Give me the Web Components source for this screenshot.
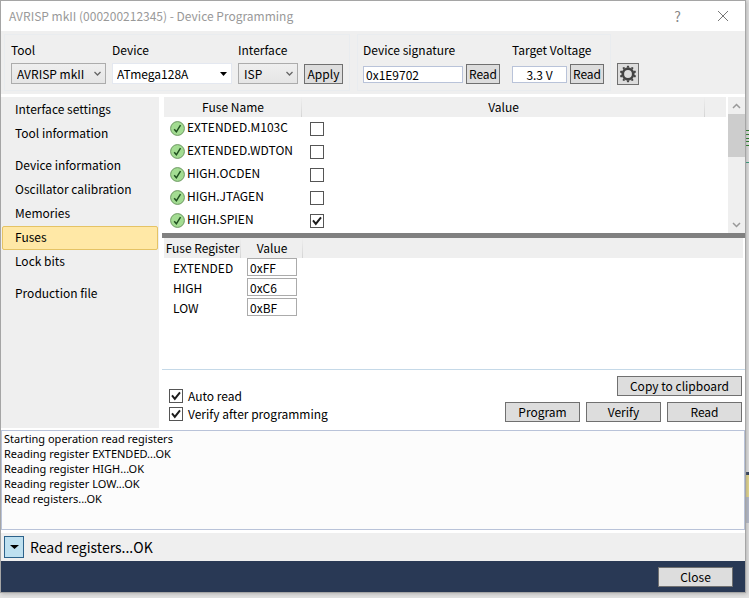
<!DOCTYPE html>
<html lang="en">
<head>
<meta charset="utf-8">
<title>Device Programming</title>
<style>
html{height:100%}
body{margin:0;min-height:100%;display:flex;color:#000;
  /* strip of the editor window that lies behind the dialog */
  background:linear-gradient(#0000 130px,#1c7a1c 130px 131px,#0000 131px 134px,#1c7a1c 134px 135px,#0000 135px 138px,#1c7a1c 138px 139px,
    #0000 139px 141px,#1c7a1c 141px 142px,#0000 142px 145px,#1c7a1c 145px 146px,#0000 146px 162px,#2a9a78 162px 163px,#0000 163px 472px,
    #293955 472px 475px,#e6d888 475px 497px,#b4bacb 497px 523px,#0000 523px) right top/4px 100% no-repeat #e2e2e2;
  font:12px/16px "Noto Sans CJK KR","Malgun Gothic",sans-serif;
  --face:#efefef;--edge:#707070;--pale:#b9c3d9}
</style>
</head>
<body>
<dp-window>
  <dp-titlebar slot="title">AVRISP mkII (000200212345) - Device Programming</dp-titlebar>
  <dp-toolbar slot="toolbar">
    <dp-group>
      <dp-select label="Tool" value="AVRISP mkII" style="--w:95px"></dp-select>
      <dp-select label="Device" value="ATmega128A" kind="combo" style="--w:120px"></dp-select>
      <dp-select label="Interface" value="ISP" style="--w:60px"></dp-select>
      <dp-button class="tool" style="--w:39px">Apply</dp-button>
    </dp-group>
    <dp-group class="second">
      <dp-reading label="Device signature" value="0x1E9702" style="--w:100px"></dp-reading>
      <dp-reading label="Target Voltage" value="3.3 V" style="--w:55px;--align:center"></dp-reading>
    </dp-group>
    <dp-gear></dp-gear>
  </dp-toolbar>
  <dp-nav slot="nav"></dp-nav>
  <dp-fuses slot="main"></dp-fuses>
  <dp-splitter slot="main"></dp-splitter>
  <dp-registers slot="main"></dp-registers>
  <dp-actions slot="main">
    <dp-check slot="checks">Auto read</dp-check>
    <dp-check slot="checks">Verify after programming</dp-check>
    <dp-button slot="copy" style="--w:125px">Copy to clipboard</dp-button>
    <dp-button slot="run" style="--w:75px">Program</dp-button>
    <dp-button slot="run" style="--w:75px">Verify</dp-button>
    <dp-button slot="run" style="--w:75px">Read</dp-button>
  </dp-actions>
  <dp-log slot="log">
    <div>Starting operation read registers</div>
    <div>Reading register EXTENDED...OK</div>
    <div>Reading register HIGH...OK</div>
    <div>Reading register LOW...OK</div>
    <div>Read registers...OK</div>
  </dp-log>
  <dp-status slot="status">Read registers...OK</dp-status>
  <dp-footer slot="footer"><dp-button style="--w:75px">Close</dp-button></dp-footer>
</dp-window>
<script>
const base = `:host,*{box-sizing:border-box}
button,input,select{font:inherit;color:inherit;margin:0;border-radius:0}`;

const checkCss = `
.tick{display:grid;width:14px;height:14px;flex:none}
.tick>*{grid-area:1/1;width:14px;height:14px}
.tick input{appearance:none;border:1px solid #555;background:#fff}
.tick svg{pointer-events:none;visibility:hidden}
.tick input:checked+svg{visibility:visible}`;
const tick = (id, on) => `<span class="tick"><input type="checkbox" id="${id}"${on ? ' checked' : ''}>
<svg viewBox="0 0 14 14"><path d="M3 6.4 5.8 9.8 11 3.4" fill="none" stroke="#1c1c1c" stroke-width="2"/></svg></span>`;

function define(name, css, html) {
  customElements.define(name, class extends HTMLElement {
    constructor() {
      super();
      this.attachShadow({mode: 'open'});
    }
    connectedCallback() {
      this.shadowRoot.innerHTML = `<style>${base}${css}</style>` +
        (typeof html === 'function' ? html(this) : html);
    }
  });
}

define('dp-window', `
:host{flex:1;display:flex;flex-direction:column;background:#fff;border:1px solid #a5a5a5;
  margin:0 3px 5px 0;box-shadow:1px 1px 4px #8888}
.body{flex:1;display:flex;gap:3px;padding:3px 0 2px}
main{flex:1;min-width:0;display:flex;flex-direction:column}`,
`<slot name="title"></slot><slot name="toolbar"></slot>
<div class="body"><slot name="nav"></slot><main><slot name="main"></slot></main></div>
<slot name="log"></slot><slot name="status"></slot><slot name="footer"></slot>`);

define('dp-titlebar', `
:host{display:flex;align-items:center;height:30px;padding-left:8px;color:#999}
h1{flex:1;margin:0;font:inherit}
button{width:45px;height:29px;border:0;padding:0;background:none;color:#888;font-size:14px}
svg{display:block;margin:auto}`,
`<h1><slot></slot></h1><button aria-label="Help">?</button>
<button aria-label="Close window"><svg width="12" height="12"><path d="M1 1 11 11M11 1 1 11" stroke="#777" fill="none"/></svg></button>`);

define('dp-toolbar', `
:host{display:flex;align-items:flex-start;gap:7px;padding:3px;background:var(--face)}`, `<slot></slot>`);

define('dp-group', `
:host{display:flex;gap:6px;align-items:flex-end;height:57px;padding:0 6px 6px;border:1px solid #e9ecef}
:host(.second){gap:12px;padding-left:5px}`, `<slot></slot>`);

define('dp-button', `
:host{display:block;width:var(--w)}
button{display:block;width:100%;height:20px;padding:0;border:1px solid var(--edge);background:#ddd;
  line-height:16px;white-space:nowrap}`,
`<button><slot></slot></button>`);

define('dp-select', `
:host{display:block;width:var(--w)}
label{display:block;margin-bottom:5px}
.box{display:grid;align-items:center}
.box>*{grid-area:1/1}
select{appearance:none;width:100%;height:21px;padding:0 0 0 5px;border:1px solid #acacac;
  background:linear-gradient(#efefef,#e5e5e5);line-height:16px}
:host([kind=combo]) select{border-color:#e4e8f0;background:#fff;padding-left:4px}
svg{justify-self:end;margin-right:4px;pointer-events:none}`,
el => `<label for="s">${el.getAttribute('label')}</label><div class="box">
<select id="s"><option>${el.getAttribute('value')}</option></select>
<svg width="9" height="6">${el.getAttribute('kind') === 'combo'
  ? '<path d="M1 1H8L4.5 5Z"/>'
  : '<path d="M1.5 1 4.5 4 7.5 1" fill="none" stroke="#666" stroke-width="1.3"/>'}</svg></div>`);

define('dp-reading', `
:host{display:block}
label{display:block;margin-bottom:6px}
.row{display:flex;gap:3px;align-items:center}
input{width:var(--w);height:17px;padding:0 2px;border:1px solid var(--pale);background:#fff;text-align:var(--align,left)}
dp-button{--w:34px}`,
el => `<label for="v">${el.getAttribute('label')}</label><div class="row">
<input id="v" value="${el.getAttribute('value')}"><dp-button>Read</dp-button></div>`);

const teeth = Array.from({length: 10}, (_, i) =>
  `<path d="M7 1.8 7.7-.2h1.6L10 1.8Z" transform="rotate(${i * 36} 8.5 8)"/>`).join('');
define('dp-gear', `
:host{display:block;padding-top:29px;margin-left:-1px}
button{display:grid;place-items:center;width:22px;height:22px;padding:0;border:1px solid var(--edge);background:#ddd}`,
`<button aria-label="Settings"><svg width="18" height="18" viewBox="-.5 -1 18 18"><g fill="#444">${teeth}</g>
<circle cx="8.5" cy="8" r="5.2" fill="none" stroke="#444" stroke-width="2.6"/></svg></button>`);

define('dp-nav', `
:host{display:block;flex:none;width:158px;padding:1px 1px 0;background:var(--face)}
a{display:block;height:24px;padding:2px 12px;border:1px solid transparent;border-radius:2px;color:inherit;text-decoration:none}
a.gap{margin-top:8px}
a[aria-current]{background:#ffe8a6;border-color:#e5c365}`,
() => '<nav>' + ['Interface settings', 'Tool information', '+Device information', 'Oscillator calibration',
  'Memories', 'Fuses', 'Lock bits', '+Production file'].map(t =>
  `<a href="#"${t[0] === '+' ? ' class="gap"' : ''}${t === 'Fuses' ? ' aria-current="page"' : ''}>${t.replace('+', '')}</a>`).join('') + '</nav>');

const tableCss = `
table{border-collapse:collapse;table-layout:fixed;width:100%}
th{height:20px;padding:0;font-weight:400;white-space:nowrap;background:linear-gradient(#efefef,#d4d4d4) right/1px 100% no-repeat var(--face)}
th:last-child{background:var(--face)}
td{padding:0}`;

define('dp-fuses', tableCss + checkCss + `
:host{display:flex;gap:2px;height:136px;padding-left:2px}
.view{flex:1;overflow:hidden}
td{height:23px}
.name{display:flex;align-items:center;gap:2px;padding-left:6px}
.name label{line-height:18px;padding-bottom:4px}
.name svg{flex:none}
td .tick{margin-left:8px}
.bar{display:flex;flex-direction:column;width:17px;background:var(--face)}
.bar button{height:17px;border:0;padding:0;background:none}
.bar i{height:43px;background:#cdcdcd}
.bar b{flex:1}
.bar svg{display:block;margin:auto}`,
() => `<div class="view"><table><colgroup><col style="width:138px"><col><col style="width:21px"></colgroup>
<thead><tr><th>Fuse Name</th><th>Value</th><th></th></tr></thead><tbody>` +
['EXTENDED.M103C', 'EXTENDED.WDTON', 'HIGH.OCDEN', 'HIGH.JTAGEN', 'HIGH.SPIEN'].map((n, i) =>
`<tr><td><div class="name"><svg width="15" height="15" viewBox="0 0 15 15"><circle cx="7.5" cy="7.5" r="6.9" fill="#a3dc92" stroke="#6d9862"/>
<path d="M4.2 8.2 6.4 10.8 10.5 4.2" fill="none" stroke="#205020" stroke-width="1.5"/></svg><label for="f${i}">${n}</label></div></td>
<td>${tick('f' + i, i === 4)}</td><td></td></tr>`).join('') +
`</tbody></table></div><div class="bar"><button aria-label="Scroll up"><svg width="9" height="6"><path d="M1 5 4.5 1.5 8 5" fill="none" stroke="#999" stroke-width="1.5"/></svg></button>
<i></i><b></b><button aria-label="Scroll down"><svg width="9" height="6"><path d="M1 1 4.5 4.5 8 1" fill="none" stroke="#999" stroke-width="1.5"/></svg></button></div>`);

define('dp-splitter', `:host{display:block;height:5px;background:#808080}`, '');

define('dp-registers', tableCss + `
:host{display:block;flex:1;min-height:131px;padding:0 2px;border-bottom:1px solid #c5d9e8}
td{height:20px}
td:first-child{padding-left:9px}
label{display:block}
input{display:block;width:50px;height:18px;margin:0 0 2px 6px;padding:0 2px;border:1px solid #ababab;background:#fff}`,
() => `<table><colgroup><col style="width:77px"><col style="width:62px"><col></colgroup>
<thead><tr><th>Fuse Register</th><th>Value</th><th></th></tr></thead><tbody>` +
[['EXTENDED', '0xFF'], ['HIGH', '0xC6'], ['LOW', '0xBF']].map(([n, v]) =>
`<tr><td><label for="${n}">${n}</label></td><td><input id="${n}" value="${v}"></td><td></td></tr>`).join('') + '</tbody></table>');

define('dp-actions', `
:host{display:flex;justify-content:space-between;align-items:flex-end;padding:6px 3px 6px 7px}
.checks{display:flex;flex-direction:column;gap:2px}
.buttons{display:flex;flex-direction:column;align-items:flex-end;gap:6px}
.run{display:flex;gap:6px}`,
`<div class="checks"><slot name="checks"></slot></div>
<div class="buttons"><slot name="copy"></slot><div class="run"><slot name="run"></slot></div></div>`);

define('dp-check', checkCss + `:host{display:flex;align-items:center;gap:5px}`,
`${tick('c', true)}<label for="c"><slot></slot></label>`);

define('dp-log', `
:host{display:block;height:100px;padding:0 2px;border:1px solid var(--pale);background:#fcfcfc;
  font-family:"Noto Sans","Noto Sans CJK KR",sans-serif;font-size:11px;line-height:15px}`, `<slot></slot>`);

define('dp-status', `
:host{display:flex;align-items:center;gap:6px;height:28px;margin-top:3px;padding:0 3px;background:var(--face);font-size:14px}
button{display:grid;place-items:center;width:20px;height:22px;padding:0;border:1px solid #2c628b;background:#bee0f0}`,
`<button aria-label="Toggle messages"><svg width="9" height="6"><path d="M0 1H9L4.5 5Z"/></svg></button><output><slot></slot></output>`);

define('dp-footer', `
:host{display:flex;justify-content:flex-end;align-items:center;height:31px;padding-right:12px;background:#293955}`, `<slot></slot>`);
</script>
</body>
</html>
